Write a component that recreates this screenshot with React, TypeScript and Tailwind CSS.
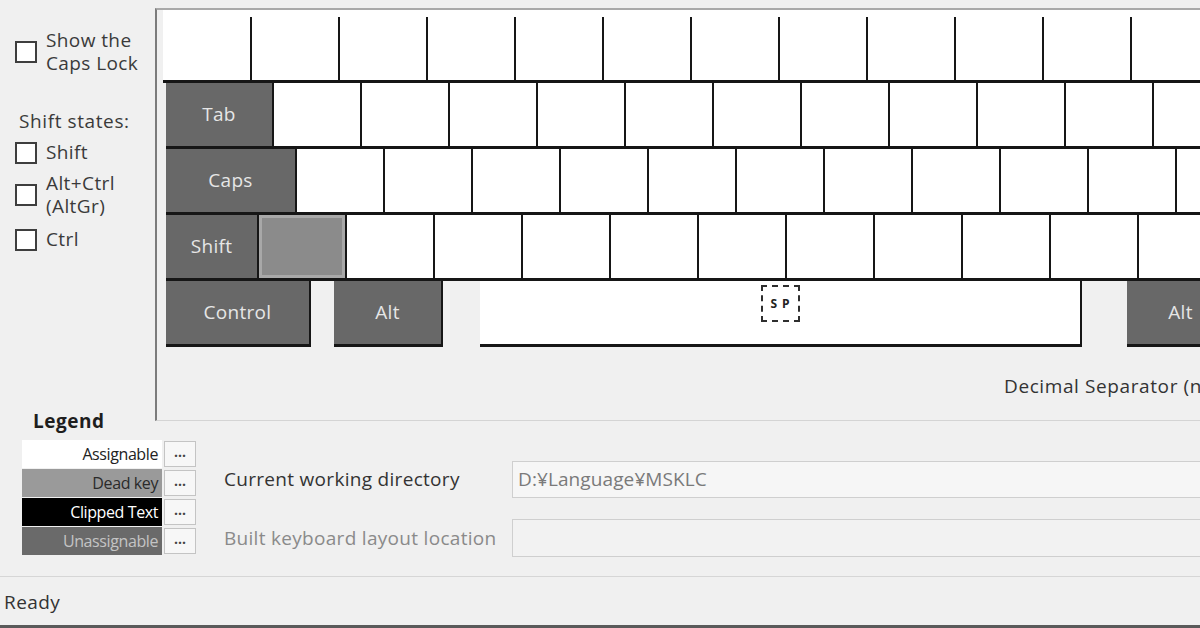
import React from "react";

const FONT = { fontFamily: '"Open Sans", "Noto Sans", sans-serif' };

function WhiteKey({ w = 88 }: { w?: number }) {
  return (
    <div
      className="shrink-0 h-full bg-white border-r-2 border-b-[3px] border-[#161616]"
      style={{ width: w }}
    />
  );
}

function DarkKey({ w, label }: { w: number; label: string }) {
  return (
    <div
      className="shrink-0 h-full bg-[#686868] border-r-2 border-b-[3px] border-[#161616] flex items-center justify-center text-[19px] tracking-[0.3px] text-[#e6e6e6]"
      style={{ width: w }}
    >
      {label}
    </div>
  );
}

function Check({ text }: { text: string }) {
  return (
    <div className="flex items-center gap-[9px]">
      <div className="w-[22px] h-[22px] border-2 border-[#3e3e3e] bg-white shrink-0" />
      <div className="text-[19px] leading-[23px] tracking-[0.4px] text-[#3a3a3a] whitespace-pre-line">
        {text}
      </div>
    </div>
  );
}

function LegendRow({
  label,
  bg,
  fg,
}: {
  label: string;
  bg: string;
  fg: string;
}) {
  return (
    <div className="flex items-center h-[29px]">
      <div
        className={`w-[140px] h-[28px] flex items-center justify-end pr-[4px] text-[16px] tracking-[-0.4px] ${bg} ${fg}`}
      >
        {label}
      </div>
      <div className="ml-[2px] w-[32px] h-[26px] bg-[#f7f7f7] border border-[#c4c4c4] flex items-center justify-center text-[14px] leading-none font-bold text-[#444] pb-[4px]">
        ...
      </div>
    </div>
  );
}

export default function App() {
  const row1 = Array.from({ length: 12 });
  const rowN = Array.from({ length: 11 });
  return (
    <div
      className="w-[1200px] h-[628px] bg-[#f0f0f0] overflow-hidden flex flex-col"
      style={FONT}
    >
      {/* main */}
      <div className="h-[576px] flex flex-col shrink-0">
        {/* top */}
        <div className="h-[421px] flex shrink-0">
          {/* left panel */}
          <div className="w-[155px] shrink-0 pl-[15px] pt-[29px] flex flex-col">
            <Check text={"Show the\nCaps Lock"} />
            <div className="mt-[35px] ml-[4px] text-[19px] leading-[23px] tracking-[0.6px] text-[#3a3a3a] whitespace-nowrap">
              Shift states:
            </div>
            <div className="mt-[8px]">
              <Check text="Shift" />
            </div>
            <div className="mt-[8px]">
              <Check text={"Alt+Ctrl\n(AltGr)"} />
            </div>
            <div className="mt-[10px]">
              <Check text="Ctrl" />
            </div>
          </div>
          {/* keyboard frame */}
          <div className="flex-1 min-w-0 mt-[8px] border-l-2 border-t-2 border-b border-l-[#7c7c7c] border-t-[#a9a9a9] border-b-[#d4d4d4] overflow-hidden flex flex-col">
            {/* row 1 */}
            <div className="ml-[6px] h-[73px] bg-white pt-[7px] flex shrink-0">
              <WhiteKey w={89} />
              {row1.map((_, i) => (
                <WhiteKey key={i} />
              ))}
            </div>
            {/* row 2 */}
            <div className="ml-[9px] h-[66px] flex shrink-0">
              <DarkKey w={108} label="Tab" />
              {rowN.map((_, i) => (
                <WhiteKey key={i} />
              ))}
            </div>
            {/* row 3 */}
            <div className="ml-[9px] h-[66px] flex shrink-0">
              <DarkKey w={131} label="Caps" />
              {rowN.map((_, i) => (
                <WhiteKey key={i} />
              ))}
            </div>
            {/* row 4 */}
            <div className="ml-[9px] h-[66px] flex shrink-0">
              <DarkKey w={93} label="Shift" />
              <div className="shrink-0 w-[88px] h-full border-r-2 border-b-[3px] border-[#161616] bg-[#7a7a7a]">
                <div className="w-full h-full border-[3px] border-[#a8a8a8] bg-[#8b8b8b]" />
              </div>
              {rowN.map((_, i) => (
                <WhiteKey key={i} />
              ))}
            </div>
            {/* row 5 */}
            <div className="ml-[9px] h-[66px] flex shrink-0">
              <DarkKey w={145} label="Control" />
              <div className="w-[23px] shrink-0" />
              <DarkKey w={109} label="Alt" />
              <div className="w-[37px] shrink-0" />
              <div className="shrink-0 w-[602px] h-full bg-white border-r-2 border-b-[3px] border-[#161616] flex justify-center pt-[4px]">
                <div className="w-[39px] h-[37px] border-2 border-dashed border-[#2e2e2e] flex items-center justify-center gap-[5px] text-[12px] font-bold text-[#222]">
                  <span>S</span>
                  <span>P</span>
                </div>
              </div>
              <div className="w-[45px] shrink-0" />
              <DarkKey w={109} label="Alt" />
            </div>
            <div className="mt-[28px] ml-[847px] text-[19px] leading-[23px] tracking-[0.6px] text-[#333] whitespace-nowrap">
              Decimal Separator (numeric keypad)
            </div>
          </div>
        </div>
        {/* bottom */}
        <div className="flex flex-1">
          <div className="w-[224px] shrink-0 pl-[22px] flex flex-col">
            <div className="-mt-[11px] ml-[11px] text-[19px] leading-[23px] tracking-[0.5px] font-bold text-[#1e1e1e]">
              Legend
            </div>
            <div className="mt-[6px] flex flex-col">
              <LegendRow label="Assignable" bg="bg-white" fg="text-[#222]" />
              <LegendRow label="Dead key" bg="bg-[#9a9a9a]" fg="text-[#2a2a2a]" />
              <LegendRow label="Clipped Text" bg="bg-black" fg="text-white" />
              <LegendRow label="Unassignable" bg="bg-[#6a6a6a]" fg="text-[#c4c4c4]" />
            </div>
          </div>
          <div className="flex-1 min-w-0 pt-[40px] flex flex-col">
            <div className="flex items-center h-[37px]">
              <div className="w-[288px] shrink-0 text-[19px] tracking-[0.3px] text-[#333] whitespace-nowrap">
                Current working directory
              </div>
              <div className="flex-1 h-full -mr-[10px] bg-[#f6f6f6] border border-[#cfcfcf] flex items-center pl-[5px] text-[19px] text-[#7a7a7a] tracking-[0.1px]">
                D:¥Language¥MSKLC
              </div>
            </div>
            <div className="flex items-center h-[38px] mt-[21px]">
              <div className="w-[288px] shrink-0 text-[19px] text-[#8a8a8a] whitespace-nowrap tracking-[0.3px]">
                Built keyboard layout location
              </div>
              <div className="flex-1 h-full -mr-[10px] bg-[#f2f2f2] border border-[#cfcfcf]" />
            </div>
          </div>
        </div>
      </div>
      {/* status bar */}
      <div className="flex-1 border-t border-[#d6d6d6] border-b-[3px] border-b-[#5a5a5a] flex items-center pl-[4px] text-[19px] tracking-[0.4px] text-[#333] pt-[3px]">
        Ready
      </div>
    </div>
  );
}
